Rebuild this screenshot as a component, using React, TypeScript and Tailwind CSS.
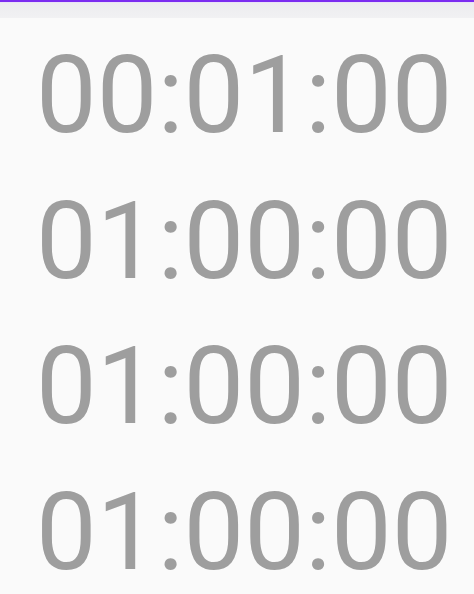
import React from "react";

const rows = ["00:01:00", "01:00:00", "01:00:00", "01:00:00"];

export default function App() {
  return (
    <div className="w-[474px] h-[594px] overflow-hidden bg-[#fafafa]">
      <div className="h-[2px] bg-[#7b2cf0]" />
      <div className="h-[1px] bg-[#e9e2f7]" />
      <div className="h-[15px] bg-gradient-to-b from-[#ececef] to-[#f1f1f3]" />
      <div className="pt-[5px] pl-[36px]">
        {rows.map((r, i) => (
          <div
            key={i}
            className="text-[108px] leading-[145.67px] text-[#9e9e9e] whitespace-nowrap"
            style={{ fontFamily: "Roboto, 'Noto Sans', sans-serif" }}
          >
            {r}
          </div>
        ))}
      </div>
    </div>
  );
}
